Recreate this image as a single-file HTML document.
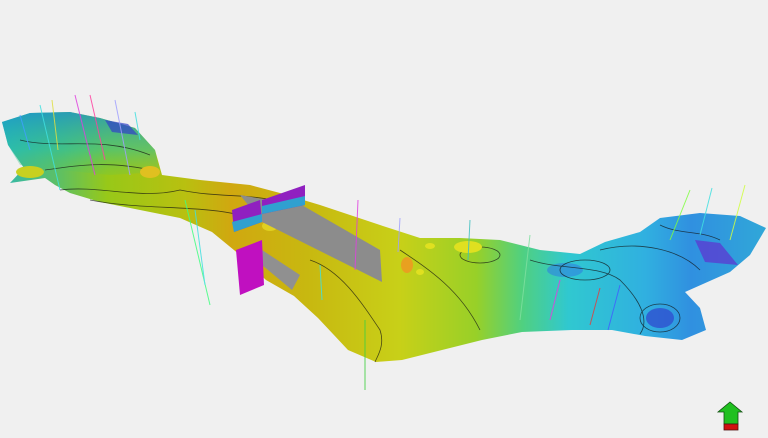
<!DOCTYPE html>
<html><head><style>html,body{margin:0;padding:0;background:#f0f0f0;width:768px;height:438px;overflow:hidden}</style></head>
<body>
<svg width="768" height="438" viewBox="0 0 768 438" xmlns="http://www.w3.org/2000/svg">
<defs>
<linearGradient id="g" x1="0" y1="0" x2="768" y2="0" gradientUnits="userSpaceOnUse">
<stop offset="0" stop-color="#30b8b0"/>
<stop offset="0.08" stop-color="#60c060"/>
<stop offset="0.14" stop-color="#98c818"/>
<stop offset="0.24" stop-color="#b8c010"/>
<stop offset="0.3" stop-color="#d0a810"/>
<stop offset="0.4" stop-color="#c8b810"/>
<stop offset="0.52" stop-color="#c8d018"/>
<stop offset="0.62" stop-color="#98d028"/>
<stop offset="0.68" stop-color="#50d080"/>
<stop offset="0.74" stop-color="#30c8d0"/>
<stop offset="0.84" stop-color="#30b0e0"/>
<stop offset="0.9" stop-color="#3090e0"/>
<stop offset="1" stop-color="#30a8d8"/>
</linearGradient>
<linearGradient id="v" x1="0" y1="110" x2="0" y2="190" gradientUnits="userSpaceOnUse">
<stop offset="0" stop-color="#1890d0" stop-opacity="0.8"/>
<stop offset="0.5" stop-color="#20c0b0" stop-opacity="0.5"/>
<stop offset="1" stop-color="#80c820" stop-opacity="0"/>
</linearGradient>
</defs>
<polygon fill="url(#g)" points="2,122 30,113 70,112 100,118 135,128 155,150 162,175 200,180 250,185 280,193 320,205 380,225 420,238 460,238 500,240 540,250 580,254 605,242 640,232 660,218 700,213 740,216 766,228 750,255 730,272 685,292 700,308 706,330 682,340 645,336 612,330 572,330 522,332 482,340 442,350 402,360 376,362 348,350 318,318 294,296 266,280 240,255 212,232 180,218 140,210 100,202 70,193 55,185 45,178 10,183 24,168 8,145"/>
<polygon fill="url(#v)" points="2,122 30,113 70,112 100,118 135,128 155,150 160,172 110,175 60,170 20,165 8,145"/>
<polygon fill="#3040c8" opacity="0.7" points="105,120 128,124 138,135 112,132"/>
<polygon fill="#6030d0" opacity="0.7" points="695,240 720,243 738,265 705,262"/>
<ellipse cx="660" cy="318" rx="14" ry="10" fill="#3050d0" opacity="0.8"/>
<ellipse cx="565" cy="270" rx="18" ry="7" fill="#3080e0" opacity="0.6"/>
<g fill="none" stroke="#111" stroke-width="0.8" opacity="0.7">
<path d="M20,140 C60,150 100,135 150,155"/>
<path d="M45,170 C80,165 110,160 160,172"/>
<path d="M60,190 C100,185 140,200 180,190 C230,200 260,190 300,210"/>
<path d="M90,200 C140,210 200,205 240,215"/>
<path d="M310,260 C340,270 360,300 380,330 C385,345 378,355 375,362"/>
<path d="M400,250 C430,270 460,290 480,330"/>
<path d="M530,260 C560,270 600,265 620,280 C640,300 650,320 640,334"/>
<path d="M600,250 C640,240 680,250 700,270"/>
<path d="M460,255 a20,8 0 1,0 40,0 a20,8 0 1,0 -40,0"/>
<path d="M560,270 a25,10 0 1,0 50,0 a25,10 0 1,0 -50,0"/>
<path d="M640,318 a20,14 0 1,0 40,0 a20,14 0 1,0 -40,0"/>
<path d="M660,225 C680,235 700,230 720,240"/>
</g>
<ellipse cx="150" cy="172" rx="10" ry="6" fill="#e0c020"/>
<ellipse cx="30" cy="172" rx="14" ry="6" fill="#c8d020"/>
<ellipse cx="270" cy="226" rx="8" ry="5" fill="#e0d020"/>
<ellipse cx="407" cy="265" rx="6" ry="8" fill="#e8a020"/>
<ellipse cx="468" cy="247" rx="14" ry="6" fill="#e0e020"/>
<ellipse cx="430" cy="246" rx="5" ry="3" fill="#e0e020"/>
<ellipse cx="420" cy="272" rx="4" ry="3" fill="#e0e020"/>
<!-- seismic -->
<polygon fill="#8c8c8c" points="240,195 268,200 300,204 380,250 382,282 262,222"/>
<polygon fill="#909090" points="262,250 300,275 292,290 262,265"/>
<polygon fill="#9020c0" points="232,210 260,200 262,222 234,232"/>
<polygon fill="#30a0d0" points="232,222 262,214 262,222 234,232"/>
<polygon fill="#9020c0" points="262,200 305,185 305,205 262,214"/>
<polygon fill="#30a0d0" points="262,206 305,196 305,205 262,214"/>
<polygon fill="#c010c0" points="236,250 262,240 264,285 240,295"/>
<!-- wells -->
<g stroke-width="1" opacity="0.85">
<line x1="40" y1="105" x2="60" y2="190" stroke="#40e0e0"/>
<line x1="75" y1="95" x2="95" y2="175" stroke="#e040e0"/>
<line x1="90" y1="95" x2="105" y2="160" stroke="#ff40a0"/>
<line x1="115" y1="100" x2="130" y2="175" stroke="#a0a0ff"/>
<line x1="52" y1="100" x2="58" y2="150" stroke="#e0e040"/>
<line x1="20" y1="115" x2="30" y2="150" stroke="#40a0ff"/>
<line x1="135" y1="112" x2="140" y2="140" stroke="#40e0e0"/>
<line x1="185" y1="200" x2="210" y2="305" stroke="#40ff80"/>
<line x1="195" y1="210" x2="205" y2="285" stroke="#40e0e0"/>
<line x1="358" y1="200" x2="355" y2="270" stroke="#e040e0"/>
<line x1="365" y1="320" x2="365" y2="390" stroke="#40d040"/>
<line x1="560" y1="280" x2="550" y2="320" stroke="#e040e0"/>
<line x1="690" y1="190" x2="670" y2="240" stroke="#80ff40"/>
<line x1="745" y1="185" x2="730" y2="240" stroke="#d0ff40"/>
<line x1="712" y1="188" x2="700" y2="235" stroke="#40e0e0"/>
<line x1="620" y1="285" x2="608" y2="330" stroke="#4060ff"/>
<line x1="600" y1="288" x2="590" y2="325" stroke="#e04040"/>
<line x1="530" y1="235" x2="520" y2="320" stroke="#80e0a0"/>
<line x1="470" y1="220" x2="468" y2="260" stroke="#40c0c0"/>
<line x1="400" y1="218" x2="398" y2="252" stroke="#a0a0ff"/>
<line x1="320" y1="265" x2="322" y2="300" stroke="#40e0e0"/>
</g>
<!-- arrow -->
<polygon points="730,402 742,412 738,412 738,424 724,424 724,412 718,412" fill="#20c020" stroke="#105010" stroke-width="0.8"/>
<rect x="724" y="424" width="14" height="6" fill="#d01010" stroke="#501010" stroke-width="0.8"/>
</svg>
</body></html>
